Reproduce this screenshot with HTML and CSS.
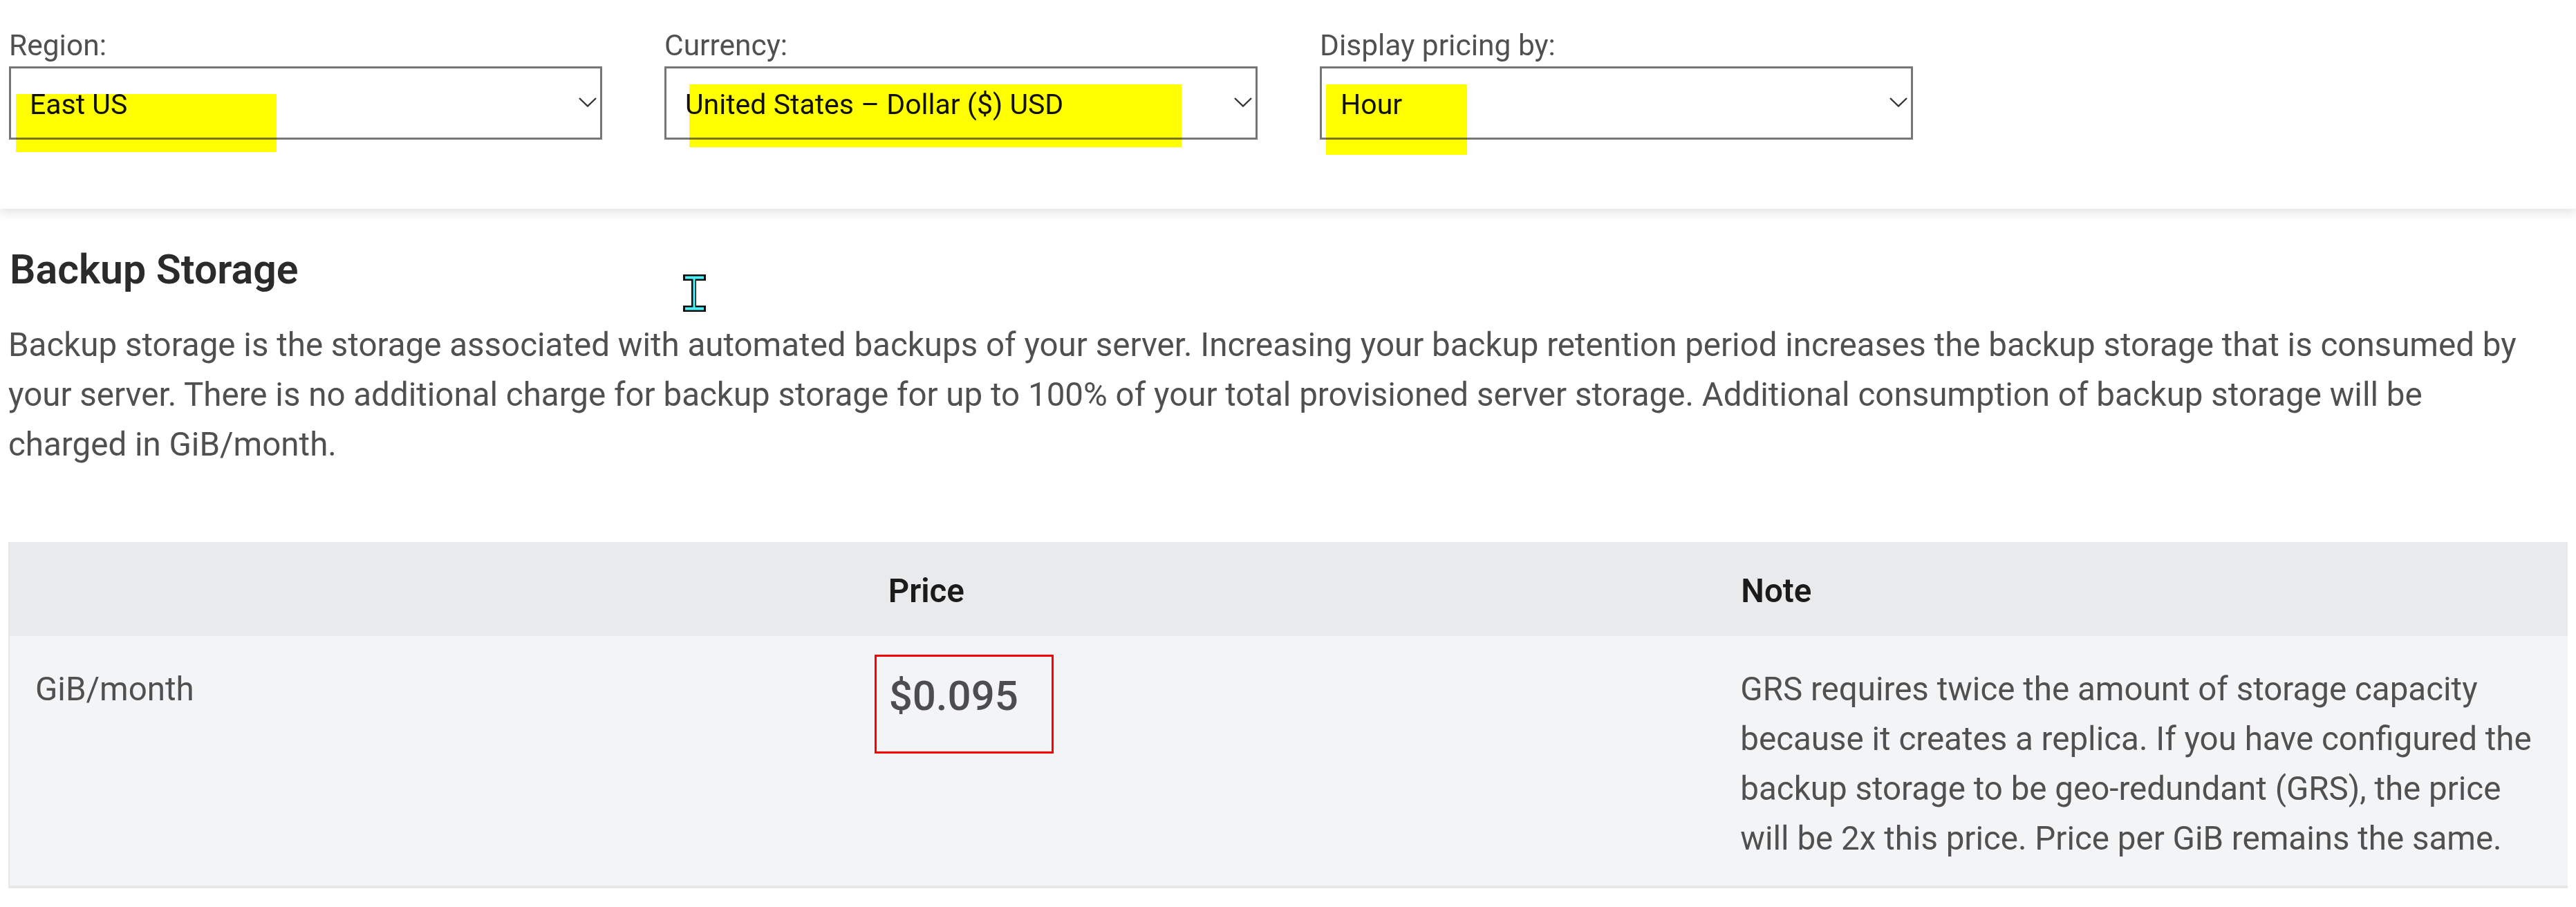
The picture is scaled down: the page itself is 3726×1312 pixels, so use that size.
FILE: index.html
```html
<!DOCTYPE html>
<html lang="en">
<head>
    <meta charset="UTF-8">
    <meta name="viewport" content="width=device-width, initial-scale=1.0">
    <title>Backup Storage pricing</title>
    <link rel="stylesheet" href="styles.css">
</head>
<body>

<div class="filter-bar">
    <div class="filter">
        <label class="filter-label">Region:</label>
        <div class="select">
            <span class="select-value">East US</span>
            <svg class="chevron" viewBox="0 0 26 14"><path d="M1 1 L13 12.5 L25 1" /></svg>
            <span class="highlight hl-region"></span>
        </div>
    </div>
    <div class="filter">
        <label class="filter-label">Currency:</label>
        <div class="select">
            <span class="select-value">United States – Dollar ($) USD</span>
            <svg class="chevron" viewBox="0 0 26 14"><path d="M1 1 L13 12.5 L25 1" /></svg>
            <span class="highlight hl-currency"></span>
        </div>
    </div>
    <div class="filter">
        <label class="filter-label">Display pricing by:</label>
        <div class="select">
            <span class="select-value">Hour</span>
            <svg class="chevron" viewBox="0 0 26 14"><path d="M1 1 L13 12.5 L25 1" /></svg>
            <span class="highlight hl-period"></span>
        </div>
    </div>
</div>

<main class="content">
    <h2>Backup Storage</h2>
    <p class="intro">Backup storage is the storage associated with automated backups of your server. Increasing your backup retention period increases the backup storage that is consumed by your server. There is no additional charge for backup storage for up to 100% of your total provisioned server storage. Additional consumption of backup storage will be charged in GiB/month.</p>

    <table class="pricing">
        <thead>
            <tr>
                <th></th>
                <th>Price</th>
                <th>Note</th>
            </tr>
        </thead>
        <tbody>
            <tr>
                <td>GiB/month</td>
                <td><span class="price">$0.095<span class="price-mark"></span></span></td>
                <td>GRS requires twice the amount of storage capacity because it creates a replica. If you have configured the backup storage to be geo-redundant (GRS), the price will be 2x this price. Price per GiB remains the same.</td>
            </tr>
        </tbody>
    </table>

    <!-- text cursor caught in the screenshot -->
    <svg class="text-cursor" viewBox="0 0 33 54">
        <path class="cursor-edge" d="M0 0 H33 V9 H19 V45 H33 V54 H0 V45 H12 V9 H0 Z" />
        <path class="cursor-fill" d="M3 2.5 H30 V6.5 H17.5 V47.5 H30 V51.5 H3 V47.5 H14.5 V6.5 H3 Z" />
    </svg>
</main>

</body>
</html>
```
FILE: styles.css
```css
body {
    font-family: Roboto, "Liberation Sans", sans-serif;
    color: #505050;
    background-color: #fff;
    margin: 0;
    padding: 0;
}

/* filters on top */
.filter-bar {
    display: flex;
    gap: 90px;
    padding: 40px 12px 100px 13px;
    background-color: #fff;
    box-shadow: 0 6px 14px rgba(0, 0, 0, 0.11);
    position: relative;
}

.filter {
    width: 858px;
}

.filter-label {
    display: block;
    font-size: 42.5px;
    line-height: 51px;
    color: #505050;
    margin-bottom: 5px;
}

.select {
    position: relative;
    box-sizing: border-box;
    height: 106px;
    border: 3px solid #767676;
    display: flex;
    align-items: center;
    justify-content: space-between;
    padding: 4px 5px 0 27px;
}

.select-value {
    font-size: 41px;
    line-height: 50px;
    color: #111;
}

.chevron {
    width: 26px;
    height: 14px;
    margin-top: -6px;
}

.chevron path {
    fill: none;
    stroke: #333;
    stroke-width: 2.4;
}

/* yellow marker strokes over the selected values */
.highlight {
    position: absolute;
    background-color: #ffff00;
    mix-blend-mode: multiply;
}

.hl-region { left: 7px; top: 37px; width: 377px; height: 84px; }
.hl-currency { left: 33px; top: 23px; width: 712px; height: 91px; }
.hl-period { left: 6px; top: 23px; width: 204px; height: 102px; }

/* main content */
.content {
    position: relative;
    padding: 52px 12px 0;
}

h2 {
    font-size: 59px;
    font-weight: 600;
    line-height: 71px;
    color: #2b2b2b;
    margin: 0 0 38px 2px;
}

.intro {
    font-size: 47.5px;
    line-height: 72px;
    margin: 0 0 105px;
    padding-right: 36px;
}

.pricing {
    width: 100%;
    table-layout: fixed;
    border-collapse: collapse;
    font-size: 47.5px;
    line-height: 72px;
    border-left: 2px solid #e6e7e9;
    border-bottom: 4px solid #e6e7e9;
}

.pricing th {
    background-color: #e9eaec;
    color: #1b1b1b;
    font-weight: 600;
    text-align: left;
    padding: 35px 38px 29px;
}

.pricing td {
    background-color: #f3f4f6;
    vertical-align: top;
    padding: 41px 38px 32px 37px;
}

.price {
    position: relative;
    display: inline-block;
    font-size: 60px;
    font-weight: 500;
    color: #4d4d4f;
    margin-top: 10px;
    margin-left: 2px;
}

/* red review box drawn around the price */
.price-mark {
    position: absolute;
    left: -21px;
    top: -24px;
    width: 259px;
    height: 143px;
    box-sizing: border-box;
    border: 3px solid #ff0000;
}

.text-cursor {
    position: absolute;
    left: 988px;
    top: 95px;
    width: 33px;
    height: 54px;
}

.cursor-edge { fill: #111; }
.cursor-fill { fill: #4ff0f7; }
```
